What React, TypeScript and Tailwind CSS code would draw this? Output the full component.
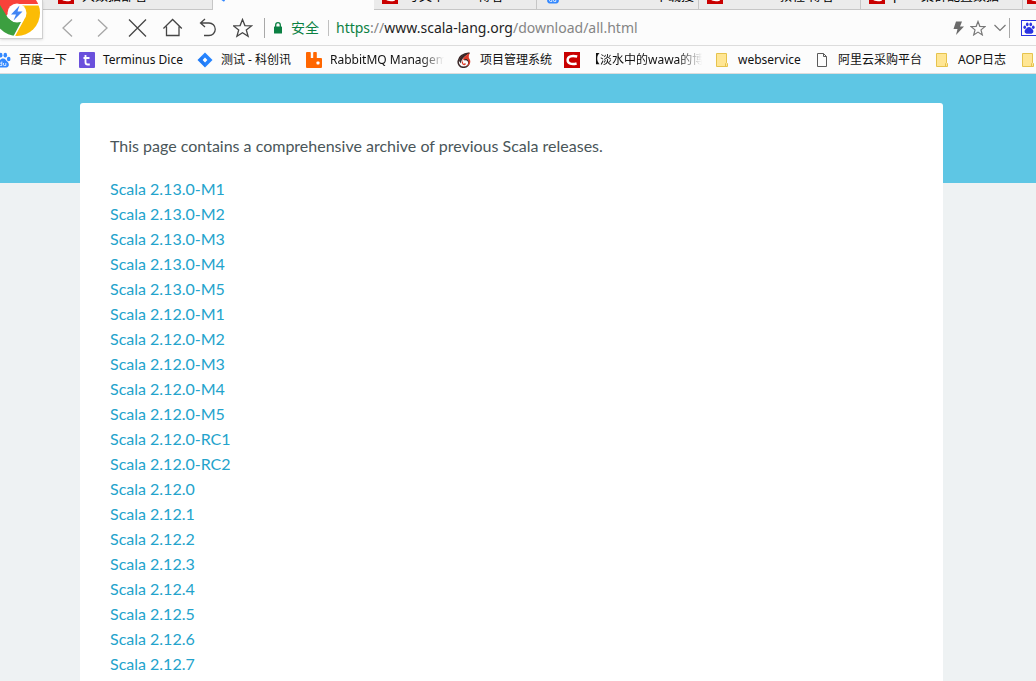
import type { ReactNode } from "react";

const tabs = [
  { lead: "大数据部署", leadWidth: "w-20", title: "", icon: "c", active: false, pad: "pl-[58px]", width: "w-[213px]" },
  { lead: "", leadWidth: "w-0", title: "", icon: "spin", active: true, pad: "pl-[7px]", width: "w-[161px]" },
  { lead: "写文章", leadWidth: "w-[72px]", title: "博客", icon: "c", active: false, pad: "pl-2", width: "w-[163px]" },
  { lead: "", leadWidth: "w-[86px]", title: "下载搜", icon: "paw", active: false, pad: "pl-2", width: "w-[162px]" },
  { lead: "", leadWidth: "w-12", title: "教程 博客", icon: "c", active: false, pad: "pl-2", width: "w-[162px]" },
  { lead: "p", leadWidth: "w-7", title: "集群配置数据", icon: "c", active: false, pad: "pl-2", width: "w-[162px]" },
  { lead: "", leadWidth: "w-0", title: "", icon: "c", active: false, pad: "pl-1", width: "w-[162px]" },
];

const bookmarks = [
  { label: "百度一下", icon: "paw", width: "w-12", fade: false },
  { label: "Terminus Dice", icon: "terminus", width: "w-[82px]", fade: false },
  { label: "测试 - 科创讯", icon: "diamond", width: "w-[73px]", fade: false },
  { label: "RabbitMQ Management", icon: "rabbit", width: "w-[114px]", fade: true },
  { label: "项目管理系统", icon: "flame", width: "w-[72px]", fade: false },
  { label: "【淡水中的wawa的博客", icon: "c", width: "w-[114px]", fade: true },
  { label: "webservice", icon: "folder", width: "w-16", fade: false },
  { label: "阿里云采购平台", icon: "file", width: "w-[84px]", fade: false },
  { label: "AOP日志", icon: "folder", width: "w-[50px]", fade: false },
  { label: "", icon: "folder", width: "w-12", fade: false },
];

const releases = [
  "2.13.0-M1",
  "2.13.0-M2",
  "2.13.0-M3",
  "2.13.0-M4",
  "2.13.0-M5",
  "2.12.0-M1",
  "2.12.0-M2",
  "2.12.0-M3",
  "2.12.0-M4",
  "2.12.0-M5",
  "2.12.0-RC1",
  "2.12.0-RC2",
  "2.12.0",
  "2.12.1",
  "2.12.2",
  "2.12.3",
  "2.12.4",
  "2.12.5",
  "2.12.6",
  "2.12.7",
];

function Paw({ className, children }: { className: string; children?: ReactNode }) {
  return (
    <svg viewBox="0 0 16 16" className={className} fill="currentColor">
      <ellipse cx="2.3" cy="7" rx="1.8" ry="2.3" />
      <ellipse cx="5.7" cy="3.2" rx="1.8" ry="2.4" />
      <ellipse cx="10.3" cy="3.2" rx="1.8" ry="2.4" />
      <ellipse cx="13.7" cy="7" rx="1.8" ry="2.3" />
      <path d="M8 6.5c2.2 0 3 1.8 4.5 3.3 2.2 2 1.7 5.4-1.2 5.7H4.7C1.8 15.2 1.3 11.8 3.5 9.8 5 8.3 5.8 6.5 8 6.5z" />
      {children}
    </svg>
  );
}

function SiteIcon({ name }: { name: string }) {
  const size = "block h-4 w-4 shrink-0";
  if (name === "paw") {
    return (
      <Paw className={`${size} text-[#3388ff]`}>
        <path
          d="M6.8 9.5v4H5.500q-1 0-1-1.200t1-1.200h1.300M8.500 11v1.700q0 .8.800.8h1.500V11"
          fill="none"
          stroke="#fff"
          strokeWidth=".8"
        />
      </Paw>
    );
  }
  if (name === "terminus") {
    return (
      <svg viewBox="0 0 16 16" className={size}>
        <rect width="16" height="16" rx="1" fill="#6a50dc" />
        <path d="M6.5 3v7.2q0 2.300 2.300 2.300h2M4.500 6h6" fill="none" stroke="#fff" strokeWidth="1.8" />
      </svg>
    );
  }
  if (name === "diamond") {
    return (
      <svg viewBox="0 0 16 16" className={size}>
        <path d="M8 .5 15.500 8 8 15.500.5 8z" fill="#2684ff" />
        <path d="M4.500 4.500 8 8v7.200L.8 8z" fill="#1868db" opacity=".3" />
        <path d="M8 5.600 10.400 8 8 10.400 5.600 8z" fill="#fff" />
      </svg>
    );
  }
  if (name === "rabbit") {
    return (
      <svg viewBox="0 0 16 16" className={size}>
        <path
          d="M1 0h3q.8 0 .8.8V6h2.400V.8q0-.8.8-.8h2q.8 0 .8.8V6H15q1 0 1 1v8q0 1-1 1H1q-1 0-1-1V1q0-1 1-1z"
          fill="#ff6600"
        />
        <rect x="10.5" y="9.5" width="3" height="3" rx=".8" fill="#fff" />
      </svg>
    );
  }
  if (name === "flame") {
    return (
      <svg viewBox="0 0 16 16" className={size}>
        <path
          d="M13.500 1C8 1.500 3 4 2.200 9c-.5 3.500 2 6.300 5.300 6.300 3.500 0 5.800-2.500 5.300-5.200-.4-2.300-2.800-3.300-4.600-2.200"
          fill="none"
          stroke="#3a2727"
          strokeWidth="1.5"
        />
        <path d="M13.800 1C8 1.500 3.500 4 3 9l2 2.500C5 7 9 4 13.800 1z" fill="#3a2727" />
        <path
          d="M13.800 1C11 2.500 7 5 6 9.500c1.500-2.500 4-3 5.500-2 2 1.500 1.500 5-1.500 7 4-1 5.500-5 3.300-7.800C12.300 5.300 12.800 3 13.800 1z"
          fill="#dc3b28"
        />
        <path d="M6.500 9.500C5.800 12 8 13.500 9.500 11.500" fill="none" stroke="#dc3b28" strokeWidth="1.3" />
      </svg>
    );
  }
  if (name === "c") {
    return (
      <svg viewBox="0 0 16 16" className={size}>
        <rect width="16" height="16" fill="#c90000" />
        <path d="M13.200 4.500C8 3.200 3.600 4.200 3.600 8s4.200 4.800 9 3.500" fill="none" stroke="#fff" strokeWidth="2.4" />
      </svg>
    );
  }
  if (name === "folder") {
    return (
      <svg viewBox="0 0 16 16" className={size}>
        <path d="M2.500 1.500h10v9l1 1v3h-11z" fill="#ffe694" stroke="#e6c34d" />
        <path d="M11.500 14v-2.500l1-1" fill="none" stroke="#e6c34d" />
      </svg>
    );
  }
  if (name === "file") {
    return (
      <svg viewBox="0 0 16 16" className={size} fill="none" stroke="#5a5a5a">
        <path d="M3.500 1.500h6l3 3v10h-9z" />
        <path d="M9.500 1.500v3h3" />
      </svg>
    );
  }
  return (
    <svg viewBox="0 0 16 16" className={size}>
      <path d="M1 10.500 4.500 13" fill="none" stroke="#3388ff" strokeWidth="2" />
    </svg>
  );
}

function BrowserLogo() {
  return (
    <div className="absolute top-0 left-0 z-10 h-[39px] w-[43px] overflow-hidden border-r border-b border-[#d0d0d0] bg-white shadow">
      <svg viewBox="0 0 42 38" className="h-[38px] w-[42px]">
        <clipPath id="disc">
          <circle cx="17" cy="13" r="23" />
        </clipPath>
        <g clipPath="url(#disc)">
          <rect x="-8" y="-12" width="50" height="50" fill="#fff" />
          <path d="M-8-12H42V4H17L6 16-8-4z" fill="#f9423a" />
          <path d="M-8-1-3 0 8 18 14 22 21 22 13 37H-8z" fill="#3c9f40" />
          <path d="M20 5.500H42V38H14L24 20 26 12z" fill="#fbbc05" />
        </g>
        <circle cx="17" cy="13" r="9.5" fill="#fff" />
        <path d="M19.500 5.500 11 14.500h5L13.500 20.500 22.500 11.500h-5z" fill="#4285f4" />
      </svg>
    </div>
  );
}

function ToolButton({ label, children }: { label: string; children: ReactNode }) {
  return (
    <button type="button" aria-label={label} className="h-5 w-5 shrink-0">
      <svg viewBox="0 0 20 20" className="block h-5 w-5" fill="none" stroke="currentColor" strokeWidth="1.3">
        {children}
      </svg>
    </button>
  );
}

function TabStrip() {
  return (
    <div className="flex h-[10px] items-end overflow-hidden bg-[#ebebeb]">
      {tabs.map((tab, i) => (
        <button
          key={i}
          type="button"
          className={`flex h-8 shrink-0 items-end gap-2 overflow-hidden border-b pb-[5px] text-left text-[13px] ${tab.pad} ${tab.width} ${
            tab.active ? "border-[#fcfcfc] bg-[#fcfcfc]" : "border-r border-[#c6c6c6] bg-[#ebebeb]"
          }`}
        >
          <SiteIcon name={tab.icon} />
          <span className="flex pb-px leading-4 whitespace-nowrap text-black">
            <span className={tab.leadWidth}>{tab.lead}</span>
            <span>{tab.title}</span>
          </span>
        </button>
      ))}
    </div>
  );
}

function Toolbar() {
  return (
    <div className="flex h-9 items-center border-b border-[#dcdcdc] bg-[#fcfcfc] pl-[58px]">
      <div className="flex items-center gap-[15px] text-[#454545]">
        <span className="flex gap-[15px] text-[#a6a6a6]">
          <ToolButton label="Back">
            <path d="M14 1.500 5 10l9 8.500" />
          </ToolButton>
          <ToolButton label="Forward">
            <path d="m5 1.500 9 8.500-9 8.500" />
          </ToolButton>
        </span>
        <ToolButton label="Stop">
          <path d="m1 1.500 17 17m0-17-17 17" />
        </ToolButton>
        <ToolButton label="Home">
          <path d="M.4 10.500 9.600 1.500l9.200 9M3.500 8.500v9h12.500v-9" />
        </ToolButton>
        <ToolButton label="Undo">
          <path d="M7 1 2.500 5 7 9M2.500 5H11a6.200 6.200 0 0 1 0 12.500H6" />
        </ToolButton>
        <ToolButton label="Favorite">
          <path d="m9.500 1.500 2.400 6.100 6.600.3-5.200 4 1.800 6.400-5.600-3.600-5.600 3.600 1.800-6.400-5.200-4 6.600-.3z" />
        </ToolButton>
      </div>
      <div className="ml-[11px] flex min-w-0 flex-1 items-center">
        <span className="h-5 w-px bg-[#a8a8a8]" />
        <svg viewBox="0 0 10 12" className="ml-2 h-3 w-[10px]" fill="#0b8043">
          <rect x="1" y="4.5" width="8" height="7" rx=".5" />
          <path d="M2.700 5V3a2.300 2.300 0 0 1 4.600 0v2" fill="none" stroke="#0b8043" strokeWidth="1.3" />
        </svg>
        <span className="ml-2 text-sm text-[#0b8043]">安全</span>
        <span className="ml-[9px] h-4 w-px bg-[#c0c0c0]" />
        <a href="#all" className="ml-[7px] text-sm whitespace-nowrap text-[#858585]">
          <span className="text-[#0b8043]">https</span>://<span className="text-[#1f1f1f]">www.scala-lang.org</span>
          /download/all.html
        </a>
      </div>
      <button type="button" aria-label="Turbo" className="h-5 w-4">
        <svg viewBox="0 0 16 20" className="block h-5 w-4" fill="#6b6b6b">
          <path d="M6 3.500h6L10 8.500h4L6 17l1.500-6H3.500z" />
        </svg>
      </button>
      <button type="button" aria-label="Add bookmark" className="ml-1 h-4 w-4">
        <svg viewBox="0 0 16 16" className="block h-4 w-4" fill="none" stroke="#777" strokeWidth="1.2">
          <path d="m8 1.500 1.800 4.800 5.200.3-4 3.300 1.300 5L8 12.100l-4.300 2.800 1.300-5-4-3.300 5.200-.3z" />
        </svg>
      </button>
      <button type="button" aria-label="More" className="ml-2 h-3 w-3">
        <svg viewBox="0 0 12 12" className="block h-3 w-3" fill="none" stroke="#777" strokeWidth="1.2">
          <path d="m.5 3 5.500 5.500L11.500 3" />
        </svg>
      </button>
      <span className="ml-[3px] h-5 w-px bg-[#a8a8a8]" />
      <button
        type="button"
        aria-label="Search engine"
        className="ml-[11px] h-4 w-[15px] overflow-hidden border border-r-0 border-[#2932e1]"
      >
        <Paw className="mx-px block h-3 w-3 text-[#2932e1]" />
      </button>
    </div>
  );
}

function BookmarkBar() {
  return (
    <nav className="flex h-7 items-center gap-3 overflow-hidden border-b border-[#dcdcdc] bg-[#fcfcfc] text-xs text-[#111]">
      {bookmarks.map((item, i) => (
        <a key={i} href="#bookmark" className={`flex shrink-0 items-center gap-2 ${i === 0 ? "-ml-[5px]" : ""}`}>
          <SiteIcon name={item.icon} />
          <span
            className={`whitespace-nowrap ${item.width} ${
              item.fade ? "overflow-hidden [mask-image:linear-gradient(to_right,black_80%,transparent)]" : ""
            }`}
          >
            {item.label}
          </span>
        </a>
      ))}
    </nav>
  );
}

export default function App() {
  return (
    <div className="flex min-h-screen flex-col bg-white">
      <header className="relative [font-family:'Noto_Sans','Noto_Sans_CJK_SC',sans-serif]">
        <BrowserLogo />
        <TabStrip />
        <Toolbar />
        <BookmarkBar />
      </header>
      <main className="flex flex-1 flex-col bg-[linear-gradient(#5ec6e4_109px,#eef2f3_109px)] pt-[29px] pr-[93px] pl-20">
        <article className="flex-1 rounded-t-[3px] bg-white px-[30px] pt-[30px] text-base leading-[25px] text-[#4a5659] [font-family:Lato,sans-serif]">
          <p>This page contains a comprehensive archive of previous Scala releases.</p>
          <ul className="mt-[18px]">
            {releases.map((version) => (
              <li key={version}>
                <a href={`#${version}`} className="text-[#23a3cc]">
                  Scala {version}
                </a>
              </li>
            ))}
          </ul>
        </article>
      </main>
    </div>
  );
}
